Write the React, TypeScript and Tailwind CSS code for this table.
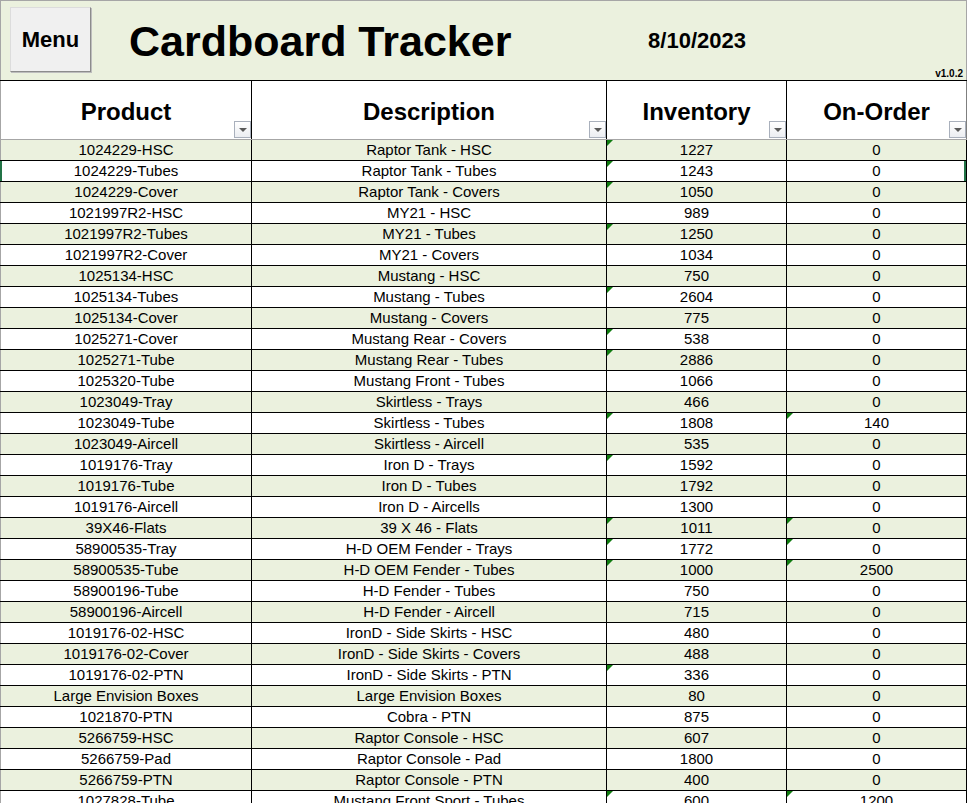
type Row = {
  product: string;
  description: string;
  inventory: string;
  onOrder: string;
  invFlag?: boolean;
  orderFlag?: boolean;
};

const ROWS: Row[] = [
  { product: "1024229-HSC", description: "Raptor Tank - HSC", inventory: "1227", onOrder: "0", invFlag: true },
  { product: "1024229-Tubes", description: "Raptor Tank - Tubes", inventory: "1243", onOrder: "0", invFlag: true },
  { product: "1024229-Cover", description: "Raptor Tank - Covers", inventory: "1050", onOrder: "0", invFlag: true },
  { product: "1021997R2-HSC", description: "MY21 - HSC", inventory: "989", onOrder: "0" },
  { product: "1021997R2-Tubes", description: "MY21 - Tubes", inventory: "1250", onOrder: "0", invFlag: true },
  { product: "1021997R2-Cover", description: "MY21 - Covers", inventory: "1034", onOrder: "0" },
  { product: "1025134-HSC", description: "Mustang - HSC", inventory: "750", onOrder: "0" },
  { product: "1025134-Tubes", description: "Mustang - Tubes", inventory: "2604", onOrder: "0", invFlag: true },
  { product: "1025134-Cover", description: "Mustang - Covers", inventory: "775", onOrder: "0" },
  { product: "1025271-Cover", description: "Mustang Rear - Covers", inventory: "538", onOrder: "0", invFlag: true },
  { product: "1025271-Tube", description: "Mustang Rear - Tubes", inventory: "2886", onOrder: "0", invFlag: true },
  { product: "1025320-Tube", description: "Mustang Front - Tubes", inventory: "1066", onOrder: "0" },
  { product: "1023049-Tray", description: "Skirtless - Trays", inventory: "466", onOrder: "0" },
  { product: "1023049-Tube", description: "Skirtless - Tubes", inventory: "1808", onOrder: "140", invFlag: true, orderFlag: true },
  { product: "1023049-Aircell", description: "Skirtless - Aircell", inventory: "535", onOrder: "0" },
  { product: "1019176-Tray", description: "Iron D - Trays", inventory: "1592", onOrder: "0", invFlag: true },
  { product: "1019176-Tube", description: "Iron D - Tubes", inventory: "1792", onOrder: "0" },
  { product: "1019176-Aircell", description: "Iron D - Aircells", inventory: "1300", onOrder: "0" },
  { product: "39X46-Flats", description: "39 X 46 - Flats", inventory: "1011", onOrder: "0", invFlag: true, orderFlag: true },
  { product: "58900535-Tray", description: "H-D OEM Fender - Trays", inventory: "1772", onOrder: "0", invFlag: true, orderFlag: true },
  { product: "58900535-Tube", description: "H-D OEM Fender - Tubes", inventory: "1000", onOrder: "2500", invFlag: true, orderFlag: true },
  { product: "58900196-Tube", description: "H-D Fender - Tubes", inventory: "750", onOrder: "0" },
  { product: "58900196-Aircell", description: "H-D Fender - Aircell", inventory: "715", onOrder: "0" },
  { product: "1019176-02-HSC", description: "IronD - Side Skirts - HSC", inventory: "480", onOrder: "0" },
  { product: "1019176-02-Cover", description: "IronD - Side Skirts - Covers", inventory: "488", onOrder: "0" },
  { product: "1019176-02-PTN", description: "IronD - Side Skirts - PTN", inventory: "336", onOrder: "0", invFlag: true },
  { product: "Large Envision Boxes", description: "Large Envision Boxes", inventory: "80", onOrder: "0" },
  { product: "1021870-PTN", description: "Cobra - PTN", inventory: "875", onOrder: "0" },
  { product: "5266759-HSC", description: "Raptor Console - HSC", inventory: "607", onOrder: "0" },
  { product: "5266759-Pad", description: "Raptor Console - Pad", inventory: "1800", onOrder: "0" },
  { product: "5266759-PTN", description: "Raptor Console - PTN", inventory: "400", onOrder: "0" },
  { product: "1027828-Tube", description: "Mustang Front Sport - Tubes", inventory: "600", onOrder: "1200", invFlag: true, orderFlag: true },
];

const COLS = "grid grid-cols-[252px_355px_180px_180px]";

function Flag() {
  return (
    <span className="absolute left-0 top-0 w-0 h-0 border-t-[6px] border-t-[#107c10] border-r-[6px] border-r-transparent" />
  );
}

function FilterButton() {
  return (
    <span className="absolute right-0 bottom-[1px] w-[17px] h-[17px] border border-[#a9b0bc] bg-gradient-to-b from-white to-[#eceef2] flex items-center justify-center">
      <span className="w-0 h-0 border-l-[4px] border-r-[4px] border-t-[4px] border-l-transparent border-r-transparent border-t-[#5a5a5a] mt-[1px]" />
    </span>
  );
}

function HeaderCell({ label, last }: { label: string; last?: boolean }) {
  return (
    <div
      className={`relative h-full flex items-center justify-center text-[24px] font-bold text-black ${
        last ? "border-r border-r-[#7f7f7f]" : "border-r border-r-black"
      }`}
    >
      <span className="mt-[3px]">{label}</span>
      <FilterButton />
    </div>
  );
}

export default function App() {
  return (
    <div className="w-[967px] h-[803px] overflow-hidden bg-white text-black font-['Liberation_Sans',Arial,sans-serif]">
      {/* title band */}
      <div className={`${COLS} h-[81px] bg-[#ebf1de] border-t border-t-[#a6a6a6] border-b border-b-black`}>
        <div className="col-span-2 flex items-start border-l border-l-[#a6a6a6]">
          <button className="ml-[9px] mt-[6px] w-[81px] h-[65px] bg-[#f0f0f0] border border-t-[#dcdcdc] border-l-[#dcdcdc] border-r-[#8c8c8c] border-b-[#8c8c8c] shadow-[1px_1px_0_#bdbdbd] text-[22px] font-bold leading-none">
            Menu
          </button>
          <h1 className="ml-[38px] mt-[19px] text-[43px] font-bold leading-none">Cardboard Tracker</h1>
        </div>
        <div className="flex justify-center items-start">
          <span className="mt-[29px] text-[22px] font-bold leading-none">8/10/2023</span>
        </div>
        <div className="flex items-end justify-end border-r border-r-[#a6a6a6] pr-[3px] pb-[1px]">
          <span className="text-[10px] font-bold leading-none">v1.0.2</span>
        </div>
      </div>

      {/* column headers */}
      <div className={`${COLS} h-[59px] border-b border-b-[#a6a6a6]`}>
        <div className="border-l border-l-[#a6a6a6] h-full">
          <HeaderCell label="Product" />
        </div>
        <HeaderCell label="Description" />
        <HeaderCell label="Inventory" />
        <HeaderCell label="On-Order" last />
      </div>

      {/* data rows */}
      {ROWS.map((r, i) => (
        <div
          key={r.product + i}
          className={`${COLS} h-[21px] border-b border-b-black text-[15px] leading-[20px] ${
            i % 2 === 0 ? "bg-[#ebf1de]" : "bg-white"
          }`}
        >
          <div className="relative text-center border-l border-l-[#a6a6a6] border-r border-r-black">
            {i === 1 && <span className="absolute -left-[1px] top-0 bottom-0 w-[2px] bg-[#217346]" />}
            {r.product}
          </div>
          <div className="text-center border-r border-r-black">{r.description}</div>
          <div className="relative text-center border-r border-r-black">
            {r.invFlag && <Flag />}
            {r.inventory}
          </div>
          <div className="relative text-center border-r border-r-black">
            {r.orderFlag && <Flag />}
            {i === 1 && <span className="absolute right-0 top-0 bottom-0 w-[2px] bg-[#217346]" />}
            {r.onOrder}
          </div>
        </div>
      ))}
    </div>
  );
}
